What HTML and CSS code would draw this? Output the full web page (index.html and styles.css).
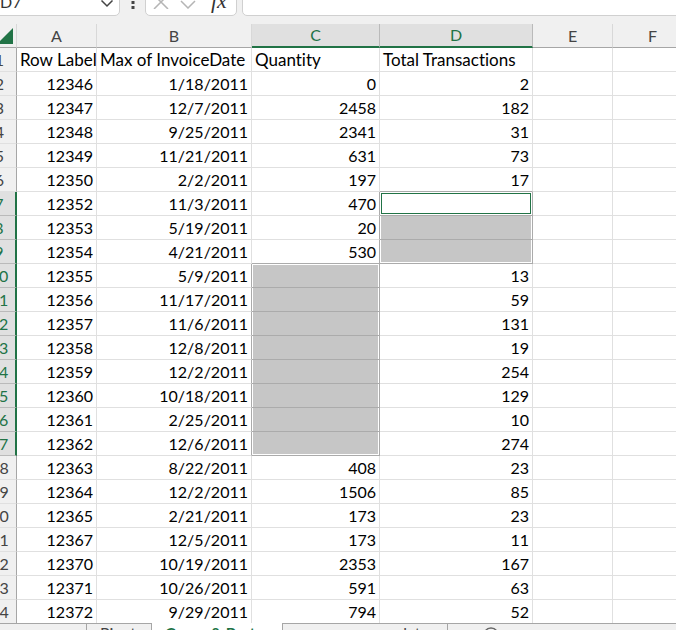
FILE: index.html
```html
<!DOCTYPE html>
<html lang="en">
<head>
<meta charset="utf-8">
<title>Workbook</title>
<link rel="stylesheet" href="styles.css">
</head>
<body>
<header class="formula-bar">
  <div class="name-box">
    <input class="name-input" type="text" value="D7" aria-label="Name box">
    <button class="icon-button" type="button" aria-label="Open name list"><svg width="14" height="14" viewBox="0 0 14 14"><path d="M1.500 5.500 7 11 12.500 5.500" fill="none" stroke="#444" stroke-width="1.500"/></svg></button>
  </div>
  <svg class="grip" width="4" height="14" viewBox="0 0 4 14"><path d="M.5 1h3v3h-3zM.5 6h3v3h-3zM.5 11h3v3h-3z" fill="#444"/></svg>
  <div class="actions">
    <button class="icon-button" type="button" aria-label="Cancel"><svg width="16" height="16" viewBox="0 0 16 16"><path d="M1 2 15 16M15 2 1 16" fill="none" stroke="#b5b5b5" stroke-width="1.500"/></svg></button>
    <button class="icon-button" type="button" aria-label="Enter"><svg width="16" height="16" viewBox="0 0 16 16"><path d="M1 8 8 15 15 8" fill="none" stroke="#b5b5b5" stroke-width="1.500"/></svg></button>
    <button class="icon-button fx" type="button" aria-label="Insert function">fx</button>
  </div>
  <input class="formula-input" type="text" aria-label="Formula">
</header>
<main class="sheet">
  <table class="grid">
    <colgroup><col class="w-head"><col class="w-a"><col class="w-b"><col class="w-c"><col class="w-d"><col class="w-e"><col class="w-e"></colgroup>
    <thead>
      <tr><th class="corner"><svg width="16" height="16" viewBox="0 0 16 16"><path d="M16 0v16H0z" fill="#217346"/></svg></th><th>A</th><th>B</th><th class="picked">C</th><th class="picked">D</th><th>E</th><th>F</th></tr>
    </thead>
    <tbody id="rows"></tbody>
  </table>
</main>
<nav class="tabs">
  <a class="tab first" href="#pivot">Pivot</a>
  <a class="tab active" href="#cases">Cases &amp; Parts</a>
  <a class="tab last" href="#data">data</a>
  <button class="icon-button add" type="button" aria-label="New sheet"><svg width="16" height="16" viewBox="0 0 16 16"><path d="M8 1a7 7 0 1 0 .01 0zM8 4v8M4 8h8" fill="none" stroke="#666" stroke-width="1.500"/></svg></button>
</nav>
<script src="sheet.js"></script>
</body>
</html>
```
FILE: styles.css
```css
* { box-sizing: border-box; }
body {
  margin: 0;
  height: 100vh;
  overflow: hidden;
  background: #f0f0f0;
  color: #000;
  font: 16px/24px Lato, "Liberation Sans", sans-serif;
  font-variant-ligatures: none;
}
button, input { font: inherit; border: 0; padding: 0; background: none; }
.icon-button { display: flex; }

.formula-bar { display: flex; align-items: flex-end; height: 16px; margin-bottom: 8px; }
.name-box, .actions, .formula-input {
  height: 32px;
  background: #fff;
  border: 1px solid #d0d0d0;
  border-radius: 5px;
}
.name-box { display: flex; align-items: center; width: 137px; margin-left: -17px; padding: 4px 5px 0 16px; }
.name-input { flex: 1; min-width: 0; color: #333; }
.grip { margin: 0 10px 7px 11px; }
.actions { display: flex; align-items: center; gap: 11px; width: 92px; margin-right: 5px; padding: 2px 5px 0 7px; }
.fx { padding-left: 4px; font: italic 22px/24px "Liberation Serif", serif; color: #333; }
.formula-input { flex: 1; min-width: 0; margin-right: -8px; }

.sheet { overflow: hidden; background: #fff; }
.grid { table-layout: fixed; width: 710px; margin-left: -17px; border-collapse: separate; border-spacing: 0; }
.w-head { width: 34px; }
.w-a { width: 80px; }
.w-b { width: 155px; }
.w-c { width: 128px; }
.w-d { width: 153px; }
.w-e { width: 80px; }
.grid th, .grid td {
  height: 24px;
  padding: 1px 3px 0;
  line-height: 22px;
  border-right: 1px solid #e0e0e0;
  border-bottom: 1px solid #e0e0e0;
  white-space: nowrap;
  overflow: hidden;
}
.grid th { padding: 1px 0 0; font-weight: 400; text-align: center; background: #f0f0f0; color: #444; }
.grid thead th { border-right-color: #d8d8d8; border-bottom-color: #a6a6a6; }
.grid tbody th { border-right-color: #a6a6a6; }
.grid td { text-align: right; }
.grid td.label { text-align: left; font-size: 17px; }
.grid .corner { padding: 0 3px 0 0; }
.corner svg { display: block; margin-left: auto; }
.grid .picked { background: #e0e0e0; color: #217346; border-color: #bababa; }
.grid thead .picked { padding: 0; border-bottom: 2px solid #217346; border-right-color: #bababa; }
.grid tbody .picked { border-right: 2px solid #217346; }
.grid .above { border-bottom-color: #ababab; }
.grid .before { border-right-color: #ababab; }
.grid .selected { background: #c6c6c6; border-color: #ababab; box-shadow: inset 1px 0 #fff, inset -1px 0 #fff; }
.grid .selected.start { box-shadow: inset 1px 0 #fff, inset -1px 0 #fff, inset 0 1px #fff; }
.grid .selected.end { box-shadow: inset 1px 0 #fff, inset -1px 0 #fff, inset 0 -1px #fff; }
.grid .current { border-color: #ababab; box-shadow: inset 0 0 0 1px #fff, inset 0 0 0 2px #217346; }

.tabs {
  display: flex;
  position: relative;
  height: 32px;
  margin-top: -1px;
  background: #f0f0f0;
  border-top: 1px solid #a6a6a6;
  line-height: 18px;
}
.tab { color: #444; text-decoration: none; white-space: nowrap; }
.first { width: 66px; margin-left: 86px; padding-left: 13px; border-left: 1px solid #a6a6a6; border-right: 1px solid #a6a6a6; }
.active { width: 130px; margin-top: -1px; padding: 1px 0 0 13px; background: #fff; color: #217346; font-weight: 700; }
.last { width: 166px; padding-left: 115px; border-left: 1px solid #a6a6a6; border-right: 1px solid #a6a6a6; }
.add { margin: 3px 0 0 35px; }
```
FILE: sheet.js
```js
const data = [
  ["Row Labels", "Max of InvoiceDate", "Quantity", "Total Transactions"],
  [12346, "1/18/2011", 0, 2],
  [12347, "12/7/2011", 2458, 182],
  [12348, "9/25/2011", 2341, 31],
  [12349, "11/21/2011", 631, 73],
  [12350, "2/2/2011", 197, 17],
  [12352, "11/3/2011", 470, ""],
  [12353, "5/19/2011", 20, ""],
  [12354, "4/21/2011", 530, ""],
  [12355, "5/9/2011", "", 13],
  [12356, "11/17/2011", "", 59],
  [12357, "11/6/2011", "", 131],
  [12358, "12/8/2011", "", 19],
  [12359, "12/2/2011", "", 254],
  [12360, "10/18/2011", "", 129],
  [12361, "2/25/2011", "", 10],
  [12362, "12/6/2011", "", 274],
  [12363, "8/22/2011", 408, 23],
  [12364, "12/2/2011", 1506, 85],
  [12365, "2/21/2011", 173, 23],
  [12367, "12/5/2011", 173, 11],
  [12370, "10/19/2011", 2353, 167],
  [12371, "10/26/2011", 591, 63],
  [12372, "9/29/2011", 794, 52]
];
const isBlank = (r, c) => c < 4 && data[r] !== undefined && data[r][c] === "";
const body = document.getElementById("rows");
data.forEach((values, r) => {
  const row = body.insertRow();
  const head = document.createElement("th");
  head.textContent = r + 1;
  if (values.includes("")) head.className = "picked";
  row.append(head);
  for (let c = 0; c < 6; c++) {
    const cell = row.insertCell();
    cell.textContent = values[c] ?? "";
    if (r === 0) cell.classList.add("label");
    if (r === 6 && c === 3) cell.classList.add("current");
    else if (isBlank(r, c)) {
      cell.classList.add("selected");
      if (!isBlank(r - 1, c)) cell.classList.add("start");
      if (!isBlank(r + 1, c)) cell.classList.add("end");
    } else {
      if (isBlank(r + 1, c)) cell.classList.add("above");
      if (isBlank(r, c + 1)) cell.classList.add("before");
    }
  }
});
```
